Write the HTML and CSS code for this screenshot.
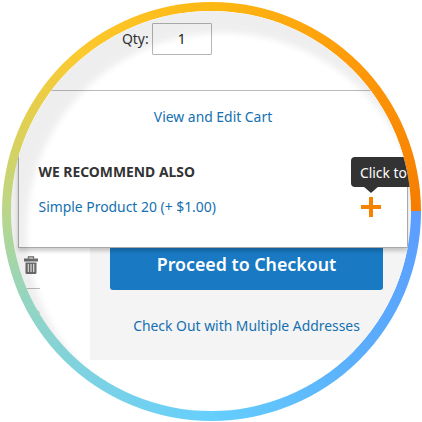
FILE: index.html
```html
<!DOCTYPE html>
<html lang="en">
<head>
  <meta charset="UTF-8">
  <title>Mini Cart</title>
  <link rel="stylesheet" href="styles.css">
</head>
<body>

<div class="ring">
  <div class="lens">
    <div class="popup">
      <div class="qty">
        <label for="qty">Qty:</label>
        <input id="qty" type="text" value="1">
      </div>
      <div class="view-cart"><a href="#">View and Edit Cart</a></div>
      <div class="recommend">
        <h3>We recommend also</h3>
        <div class="product">
          <a href="#">Simple Product 20 (+ $1.00)</a>
          <div class="add">
            <svg width="20" height="20" viewBox="0 0 20 20"><path d="M8 0h4v8h8v4h-8v8H8v-8H0V8h8z" fill="#f58300"/></svg>
            <span class="tooltip">Click to</span>
          </div>
        </div>
      </div>
    </div>
    <div class="page">
      <div class="item">
        <svg width="14" height="18" viewBox="0 0 14 18">
          <path d="M4.5 2.5V.8h5v1.7" fill="none" stroke="#666" stroke-width="1.3"/>
          <path d="M0 2.5h14v3H0zM1.5 6.5h11v10.3q0 1.2-1.2 1.2H2.7q-1.2 0-1.2-1.2z" fill="#6b6b6b"/>
          <path d="M4.3 8v8M7 8v8M9.7 8v8" stroke="#e4e4e4" stroke-width="1.2"/>
        </svg>
        <div class="next"><span class="dot"></span></div>
      </div>
      <div class="summary">
        <button>Proceed to Checkout</button>
        <a href="#">Check Out with Multiple Addresses</a>
      </div>
    </div>
  </div>
</div>

</body>
</html>
```
FILE: styles.css
```css
* {
  box-sizing: border-box;
}
body {
  margin: 0;
  padding: 1.5px;
  background: #fff;
  font-family: "Noto Sans", "Open Sans", sans-serif;
  font-size: 13.9px;
  line-height: 20px;
  color: #333;
  overflow: hidden;
}
a {
  color: #1470b0;
  text-decoration: none;
}
.ring {
  width: 419px;
  height: 419px;
  padding: 9.5px;
  border-radius: 50%;
  background: conic-gradient(#fdb813, #ff9d0b 40deg, #f57c00 90deg, #5c9dff 90deg, #5aaefb 135deg, #65cffd 180deg, #7fd2e0 220deg, #94d5c0 245deg, #b9d68b 270deg, #dbd15a 291deg, #fcc92f 320deg, #fdb813);
}
.lens {
  position: relative;
  width: 400px;
  height: 400px;
  border-radius: 50%;
  background: #fff;
  overflow: hidden;
}
/* soft shade along the upper left edge of the lens */
.lens::after {
  content: "";
  position: absolute;
  inset: 0;
  z-index: 3;
  border-radius: 50%;
  box-shadow: inset 12px 18px 6px 4px rgba(0, 0, 0, 0.065);
  pointer-events: none;
}
.popup {
  position: relative;
  z-index: 2;
  width: 390px;
  height: 237px;
  margin-left: 7px;
  background: #fff;
  border: 1px solid #aaa;
  border-top: none;
  box-shadow: 0 3px 4px rgba(0, 0, 0, 0.2);
}
.qty {
  display: flex;
  align-items: center;
  gap: 3px;
  height: 80px;
  padding: 0 0 24px 103px;
  border-bottom: 1px solid #bbb;
}
.qty input {
  width: 60px;
  height: 32px;
  padding: 0;
  border: 1px solid #b5b5b5;
  border-radius: 1px;
  background: #fff;
  font: inherit;
  color: #222;
  text-align: center;
}
.view-cart {
  padding-top: 16px;
  text-align: center;
}
.recommend {
  padding: 35px 26px 0 19.5px;
}
.recommend h3 {
  margin: 0;
  font-size: 13.9px;
  font-weight: 700;
  text-transform: uppercase;
}
.product {
  display: flex;
  justify-content: space-between;
  align-items: center;
  margin-top: 14px;
}
.product > a {
  padding-top: 1px;
}
.add {
  position: relative;
  height: 20px;
}
.add svg {
  display: block;
}
.tooltip {
  position: absolute;
  left: -10px;
  bottom: 30px;
  width: 110px;
  height: 30px;
  padding-left: 9px;
  border-radius: 4px;
  background: #333;
  color: #fff;
  font-size: 13.8px;
  line-height: 31px;
}
.tooltip::after {
  content: "";
  position: absolute;
  left: 12px;
  top: 29px;
  border: 8px solid transparent;
  border-top: 7px solid #333;
  border-bottom: none;
}
.page {
  display: flex;
  height: 163px;
}
.item {
  width: 79px;
  padding: 8px 50px 0 13px;
}
.item svg {
  display: block;
}
.next {
  height: 30px;
  margin-top: 14px;
  padding-top: 21px;
  border-top: 1px solid #bbb;
}
.dot {
  display: block;
  width: 5px;
  height: 4px;
  margin-left: auto;
  border-radius: 0 4px 0 0;
  background: #ccc;
}
.summary {
  display: flex;
  flex-direction: column;
  align-items: center;
  width: 321px;
  height: 112px;
  padding-right: 8px;
  background: #f4f4f4;
}
.summary button {
  flex: none;
  width: 273px;
  height: 42px;
  padding: 0 0 10px;
  border: none;
  border-radius: 0 0 3px 3px;
  background: #1979c3;
  color: #fff;
  font-family: inherit;
  font-size: 17.8px;
  font-weight: 600;
}
.summary a {
  margin-top: 26px;
}
```
